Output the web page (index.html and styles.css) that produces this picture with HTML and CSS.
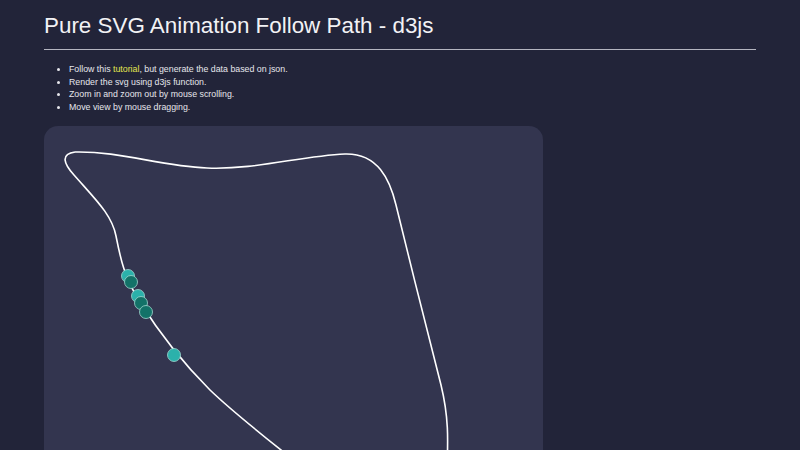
FILE: index.html
```html
<!DOCTYPE html>
<html lang="en">
<head>
<meta charset="utf-8">
<title>Pure SVG Animation Follow Path - d3js</title>
<link rel="stylesheet" href="styles.css">
</head>
<body>
<main class="page">
  <h1 class="title">Pure SVG Animation Follow Path - d3js</h1>
  <hr class="rule">
  <ul class="notes">
    <li>Follow this <a class="link" href="#">tutorial</a>, but generate the data based on json.</li>
    <li>Render the svg using d3js function.</li>
    <li>Zoom in and zoom out by mouse scrolling.</li>
    <li>Move view by mouse dragging.</li>
  </ul>
  <div class="canvas">
    <svg class="stage" viewBox="0 0 499 324" width="499" height="324">
      <g transform="translate(-44,-126)">
        <path class="track" d="M 75 152
          C 120 151, 160 166, 207 168
          C 255 170, 300 156, 345 154
          C 378 153, 390 180, 396 205
          C 410 262, 428 335, 441 385
          C 449 418, 448 440, 447 470
          M 75 152
          C 60 154, 64 164, 74 175
          C 96 200, 112 215, 116 236
          C 120 256, 124 278, 140 302
          C 160 334, 180 360, 210 390
          C 235 414, 262 435, 300 465" />
        <circle class="dot light" cx="128" cy="276" r="6.5" />
        <circle class="dot dark" cx="131" cy="282" r="6.5" />
        <circle class="dot light" cx="138" cy="296" r="6.5" />
        <circle class="dot dark" cx="141" cy="303" r="6.5" />
        <circle class="dot dark" cx="146" cy="312" r="6.5" />
        <circle class="dot light" cx="174" cy="355" r="6.5" />
      </g>
    </svg>
  </div>
</main>
</body>
</html>
```

FILE: styles.css
```css
html, body {
  margin: 0;
  padding: 0;
  overflow: hidden;
  background: #222439;
}

.page {
  padding: 0 44px;
  font-family: "Liberation Sans", Arial, sans-serif;
  color: #e8e8ee;
}

.title {
  margin: 13px 0 0;
  font-size: 22.4px;
  font-weight: normal;
  line-height: 25px;
  color: #f2f2f5;
}

.rule {
  margin: 11px 0 0;
  border: 0;
  height: 1px;
  background: #b4b5c0;
}

.notes {
  margin: 13px 0 0;
  padding-left: 25px;
  font-size: 8.8px;
  line-height: 12.7px;
  color: #e6e6ec;
}

.link {
  color: #e3e64f;
  text-decoration: none;
}

.canvas {
  margin-top: 12px;
  width: 499px;
  height: 324px;
  background: #33354f;
  border-radius: 14px 14px 0 0;
  overflow: hidden;
}

.stage {
  display: block;
}

.track {
  fill: none;
  stroke: #ffffff;
  stroke-width: 1.6;
}

.dot {
  stroke: #9fd8cf;
  stroke-width: 0.8;
}

.light {
  fill: #2bb1ab;
}

.dark {
  fill: #137268;
}
```
